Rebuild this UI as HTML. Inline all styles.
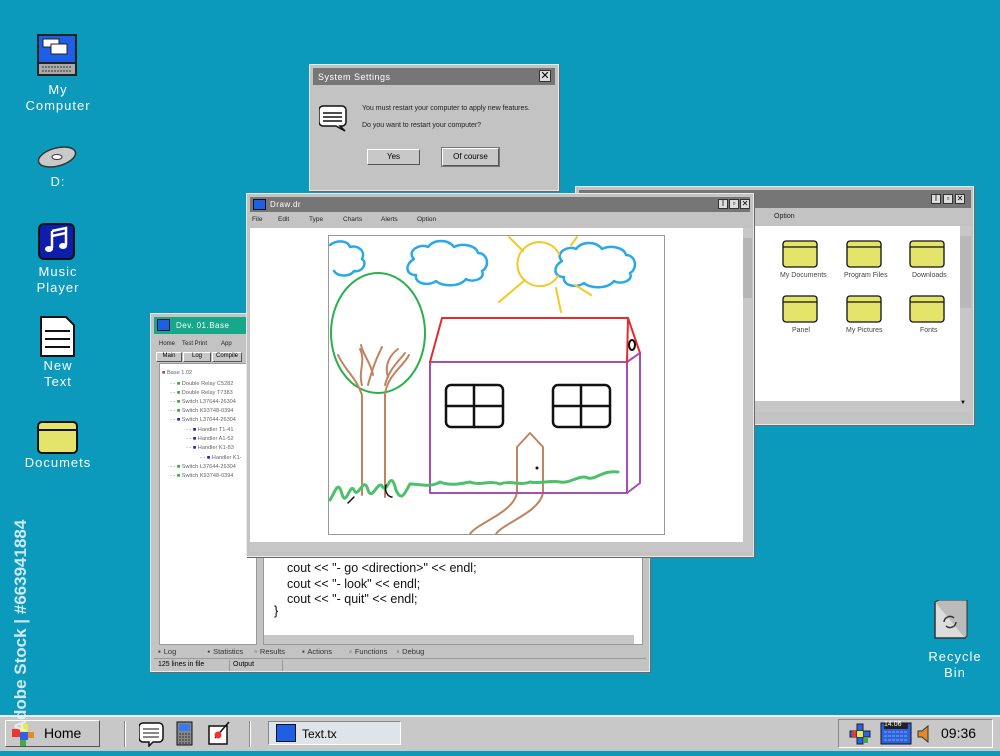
<!DOCTYPE html>
<html><head><meta charset="utf-8"><style>
*{margin:0;padding:0;box-sizing:border-box}
body{width:1000px;height:750px;overflow:hidden;background:#0b99bc;font-family:"Liberation Sans",sans-serif;position:relative}
.a{position:absolute}
.lbl{position:absolute;color:#fff;font-size:13px;letter-spacing:1px;text-align:center;width:100px;line-height:16px}
.win{position:absolute;background:#c3c3c3;border:1px solid #e8e8e8;box-shadow:1px 1px 0 #6a6a6a}
.tb{position:absolute;background:#767676;color:#fff;font-size:9px;letter-spacing:.5px}
.m{position:absolute;font-size:7px;color:#222}
.wb{position:absolute;width:10px;height:10px;background:#ddd;border:1px solid #333;font-size:8px;line-height:8px;text-align:center;color:#000}
.sm{font-size:7px;color:#444;position:absolute;white-space:nowrap}
.btn{position:absolute;background:#c8c8c8;border:1px solid #fff;border-right-color:#555;border-bottom-color:#555;font-size:8px;text-align:center}
</style></head><body>

<!-- desktop icons -->
<svg class="a" style="left:36px;top:34px" width="44" height="42"><rect x="2" y="1" width="38" height="28" fill="#1e5fe6" stroke="#222" stroke-width="2"/><rect x="7" y="5" width="16" height="8" fill="#fff" stroke="#222"/><rect x="15" y="10" width="16" height="10" fill="#fff" stroke="#222"/><rect x="2" y="29" width="38" height="12" fill="#aaa" stroke="#222" stroke-width="2"/><path d="M6 33h30M6 37h30" stroke="#333" stroke-dasharray="2 1"/></svg>
<div class="lbl" style="left:8px;top:82px">My</div>
<div class="lbl" style="left:8px;top:98px">Computer</div>
<svg class="a" style="left:37px;top:146px" width="42" height="24"><ellipse cx="20" cy="11" rx="19" ry="9" fill="#c9c9c9" stroke="#333" stroke-width="1.5" transform="rotate(-15 20 11)"/><ellipse cx="20" cy="11" rx="5" ry="2.5" fill="#fff" stroke="#333"/></svg>
<div class="lbl" style="left:8px;top:174px">D:</div>
<svg class="a" style="left:38px;top:223px" width="38" height="37"><rect x="1" y="1" width="35" height="35" rx="5" fill="#0e1eaa" stroke="#111" stroke-width="2"/><path d="M14 8v17M28 5v17M14 8l14-3v5l-14 3" stroke="#fff" stroke-width="2.5" fill="none"/><ellipse cx="11" cy="26" rx="4" ry="3" fill="#fff"/><ellipse cx="25" cy="23" rx="4" ry="3" fill="#fff"/></svg>
<div class="lbl" style="left:8px;top:264px">Music</div>
<div class="lbl" style="left:8px;top:280px">Player</div>
<svg class="a" style="left:40px;top:316px" width="36" height="42"><path d="M1 1h25l8 8v31H1z" fill="#fff" stroke="#111" stroke-width="2"/><path d="M5 15h25M5 23h25M5 31h25" stroke="#111" stroke-width="2"/></svg>
<div class="lbl" style="left:8px;top:358px">New</div>
<div class="lbl" style="left:8px;top:374px">Text</div>
<svg class="a" style="left:37px;top:421px" width="42" height="34"><rect x="1" y="1" width="39" height="31" rx="4" fill="#e5e46a" stroke="#111" stroke-width="2"/><path d="M1 9h39" stroke="#111" stroke-width="2"/></svg>
<div class="lbl" style="left:8px;top:455px">Documets</div>
<svg class="a" style="left:933px;top:600px" width="36" height="42"><rect x="2" y="2" width="30" height="36" fill="#ddd" stroke="#333" stroke-width="1.5"/><path d="M2 2l4-2h28v36l-2 2" fill="#bbb" stroke="#333"/><path d="M11 22a6 6 0 0 1 10-4M23 22a6 6 0 0 1-10 4" stroke="#333" fill="none" stroke-width="1.5"/></svg>
<div class="lbl" style="left:905px;top:649px">Recycle</div>
<div class="lbl" style="left:905px;top:665px">Bin</div>

<!-- System settings dialog -->
<div class="win" style="left:309px;top:64px;width:250px;height:127px">
<div class="tb" style="left:3px;top:3px;width:242px;height:17px;padding:4px 5px">System Settings</div>
<div class="wb" style="left:229px;top:5px;width:12px;height:12px;font-size:11px;line-height:10px">✕</div>
<svg class="a" style="left:9px;top:40px" width="30" height="28"><path d="M4 1h19a4 4 0 0 1 4 4v12a4 4 0 0 1-4 4h-2l5 5-9-5H4a4 4 0 0 1-4-4V5a4 4 0 0 1 4-4z" fill="#fff" stroke="#111" stroke-width="1.5"/><path d="M4 8h19M4 12h19M4 16h19" stroke="#111" stroke-width="1.5"/></svg>
<div class="m" style="left:52px;top:40px">You must restart your computer to apply new features.</div>
<div class="m" style="left:52px;top:57px">Do you want to restart your computer?</div>
<div class="btn" style="left:57px;top:84px;width:53px;height:16px;line-height:14px">Yes</div>
<div class="btn" style="left:132px;top:83px;width:57px;height:18px;line-height:16px;outline:1px solid #777">Of course</div>
</div>

<!-- Explorer window -->
<div class="win" style="left:575px;top:186px;width:399px;height:239px">
<div class="tb" style="left:3px;top:3px;width:392px;height:18px"></div>
<div class="wb" style="left:355px;top:7px">I</div><div class="wb" style="left:367px;top:7px">▫</div><div class="wb" style="left:379px;top:7px">✕</div>
<div class="m" style="left:198px;top:26px">Option</div>
<div class="a" style="left:3px;top:39px;width:381px;height:175px;background:#fff"></div>
<div class="a" style="left:384px;top:39px;width:11px;height:186px;background:#c7c7c7"><div class="a" style="top:10px;left:0;width:11px;height:72px;background:#b8b8b8"></div><div class="a" style="top:174px;left:0;font-size:6px">▼</div></div>
<div class="a" style="left:3px;top:214px;width:381px;height:11px;background:#c7c7c7"><div class="a" style="left:0;width:170px;height:11px;background:#b8b8b8"></div></div>
</div>
<svg class="a" style="left:575px;top:186px" width="399" height="160">
<g fill="#e5e46a" stroke="#111" stroke-width="1.3">
<rect x="208" y="55" width="34" height="26" rx="3"/><rect x="272" y="55" width="34" height="26" rx="3"/><rect x="335" y="55" width="34" height="26" rx="3"/>
<rect x="208" y="110" width="34" height="26" rx="3"/><rect x="272" y="110" width="34" height="26" rx="3"/><rect x="335" y="110" width="34" height="26" rx="3"/>
<path d="M208 61h34M272 61h34M335 61h34M208 116h34M272 116h34M335 116h34"/></g></svg>
<div class="sm" style="left:780px;top:272px">My Documents</div><div class="sm" style="left:844px;top:272px">Program Files</div><div class="sm" style="left:912px;top:272px">Downloads</div>
<div class="sm" style="left:792px;top:327px">Panel</div><div class="sm" style="left:846px;top:327px">My Pictures</div><div class="sm" style="left:920px;top:327px">Fonts</div>

<!-- Dev window -->
<div class="win" style="left:150px;top:313px;width:500px;height:359px">
<div class="a" style="left:3px;top:3px;width:95px;height:17px;background:#17a88c;color:#fff;font-size:8px;padding:4px 0 0 22px;letter-spacing:.5px">Dev. 01.Base</div>
<div class="a" style="left:6px;top:5px;width:13px;height:12px;background:#1e5fe6;border:1px solid #112"></div>
<div class="m" style="left:8px;top:27px;font-size:6px">Home</div><div class="m" style="left:31px;top:27px;font-size:6px">Test Print</div><div class="m" style="left:70px;top:27px;font-size:6px">App</div>
<div class="btn" style="left:5px;top:38px;width:26px;height:10px;font-size:6px">Main</div>
<div class="btn" style="left:32px;top:38px;width:28px;height:10px;font-size:6px">Log</div>
<div class="btn" style="left:61px;top:38px;width:30px;height:10px;font-size:6px">Compile</div>
<div class="a" style="left:8px;top:49px;width:98px;height:282px;background:#fff;border:1px solid #999"></div>
<div class="a" style="left:112px;top:243px;width:380px;height:88px;background:#fff;border:1px solid #999"></div>
<div class="a" style="left:113px;top:321px;width:370px;height:9px;background:#c7c7c7"></div>
<div class="a" style="left:3px;top:333px;width:492px;height:12px;border-bottom:1px solid #999"></div>
<div class="a" style="left:5px;top:346px;width:74px;height:11px;border-right:1px solid #999;font-size:7px;padding:1px 2px">125 lines in file</div>
<div class="a" style="left:80px;top:346px;width:52px;height:11px;border-right:1px solid #999;font-size:7px;padding:1px 2px">Output</div>
</div>
<div class="a" style="left:160px;top:369px;width:90px;height:120px;font-size:5.6px;color:#666;line-height:9px;white-space:nowrap">
<div style="margin-left:2px"><span style="color:#b44">■</span> Base 1.02</div>
<div style="margin-left:10px;margin-top:2px">- - <span style="color:#3a3">■</span> Double Relay C5282</div>
<div style="margin-left:10px">- - <span style="color:#3a3">■</span> Double Relay T7383</div>
<div style="margin-left:10px">- - <span style="color:#3a3">■</span> Switch L37644-26304</div>
<div style="margin-left:10px">- - <span style="color:#3a3">■</span> Switch K93748-0394</div>
<div style="margin-left:10px">- - <span style="color:#22b">■</span> Switch L37644-26304</div>
<div style="margin-left:26px;margin-top:1px">- - <span style="color:#22b">■</span> Handler T1-41</div>
<div style="margin-left:26px">- - <span style="color:#22b">■</span> Handler A1-52</div>
<div style="margin-left:26px">- - <span style="color:#22b">■</span> Handler K1-83</div>
<div style="margin-left:40px;margin-top:1px">- - <span style="color:#22b">■</span> Handler K1-</div>
<div style="margin-left:10px">- - <span style="color:#3a3">■</span> Switch L37644-26304</div>
<div style="margin-left:10px">- - <span style="color:#3a3">■</span> Switch K93748-0394</div>
</div>
<div class="a" style="left:158px;top:647px;font-size:7.5px;color:#333;white-space:nowrap;word-spacing:1px">▪ Log <span style="margin-left:28px">▪ Statistics</span> <span style="margin-left:8px">▫ Results</span> <span style="margin-left:14px">▪ Actions</span> <span style="margin-left:14px">▫ Functions</span> <span style="margin-left:6px">▫ Debug</span></div>
<div class="a" style="left:287px;top:561px;font-size:12.5px;line-height:15.5px;color:#111;white-space:pre">cout &lt;&lt; "- go &lt;direction&gt;" &lt;&lt; endl;
cout &lt;&lt; "- look" &lt;&lt; endl;
cout &lt;&lt; "- quit" &lt;&lt; endl;</div>
<div class="a" style="left:274px;top:604px;font-size:12.5px">}</div>

<!-- Draw window -->
<div class="win" style="left:246px;top:193px;width:508px;height:364px">
<div class="tb" style="left:3px;top:3px;width:500px;height:15px;padding:3px 0 0 20px;font-size:8px">Draw.dr</div>
<div class="a" style="left:6px;top:5px;width:13px;height:11px;background:#1e5fe6;border:1px solid #112"></div>
<div class="wb" style="left:471px;top:5px">I</div><div class="wb" style="left:482px;top:5px">▫</div><div class="wb" style="left:493px;top:5px">✕</div>
<div class="m" style="left:5px;top:22px;font-size:6.5px">File</div><div class="m" style="left:31px;top:22px;font-size:6.5px">Edit</div><div class="m" style="left:62px;top:22px;font-size:6.5px">Type</div><div class="m" style="left:96px;top:22px;font-size:6.5px">Charts</div><div class="m" style="left:134px;top:22px;font-size:6.5px">Alerts</div><div class="m" style="left:170px;top:22px;font-size:6.5px">Option</div>
<div class="a" style="left:3px;top:34px;width:493px;height:314px;background:#fff"></div>
<div class="a" style="left:496px;top:34px;width:9px;height:314px;background:#c7c7c7"><div class="a" style="top:10px;width:9px;height:60px;background:#b5b5b5"></div></div>
<div class="a" style="left:3px;top:348px;width:502px;height:10px;background:#c7c7c7"></div>
</div>
<svg class="a" style="left:328px;top:235px" width="337" height="300">
<rect x="0.5" y="0.5" width="336" height="299" fill="#fff" stroke="#999"/>
<g fill="none" stroke-linecap="round" stroke-linejoin="round">
<g stroke="#2aa9e8" stroke-width="2.5">
<path d="M2 10c8-6 18-4 20 2 8-2 16 4 12 12 6 4 0 14-8 12-4 6-16 6-20 0"/>
<path d="M86 24c-8-8 6-16 14-12 6-8 20-8 26 0 8-4 22-2 24 6 10 0 12 14 4 18 4 8-10 12-16 8-6 8-24 8-30 2-8 6-22 2-20-6-10 0-12-10-2-16z"/>
<path d="M234 26c-8-8 6-16 14-12 6-8 20-8 26 0 8-4 22-2 24 6 10 0 12 14 4 18 4 8-10 12-16 8-6 8-24 8-30 2-8 6-22 2-20-6-10 0-12-10-2-16z"/>
</g>
<g stroke="#f5c825" stroke-width="2">
<path d="M230 41a22 22 0 1 1 1-22"/>
<path d="M181 2l14 14M249 2l-6 8M247 50l16 10M197 45l-26 22M228 53l5 24"/>
</g>
<ellipse cx="50" cy="98" rx="47" ry="60" stroke="#28b04a" stroke-width="2"/>
<g stroke="#c08560" stroke-width="2">
<path d="M34 260V160M57 262V160M34 160c-6-18-18-26-24-40M34 150c-4-14 4-24-2-36M40 150c4-16 8-26 14-38M57 160c2-20 18-28 24-40M57 150c4-16 14-24 20-32M45 140c-2-12-10-20-12-30M60 142c-4-12 2-22 10-28"/>
<path d="M189 258V212l13-14 13 14v46M189 258c-4 20-40 30-47 41M215 258c-4 20-40 30-47 41"/>
</g>
<g stroke="#a54fb5" stroke-width="2"><path d="M102 127h197l13-9M102 127v131h197V127M312 118v130l-13 10"/></g>
<g stroke="#e82a2a" stroke-width="2"><path d="M102 127l12-44h186l12 35M300 83l-1 44"/></g>
<ellipse cx="304" cy="110" rx="3" ry="5" stroke="#111" stroke-width="2"/>
<g stroke="#111" stroke-width="2.5"><rect x="118" y="150" width="57" height="42" rx="5"/><path d="M146 150v42M118 171h57"/><rect x="225" y="150" width="57" height="42" rx="5"/><path d="M253 150v42M225 171h57"/></g>
<circle cx="209" cy="233" r="1.5" fill="#111"/>
<path d="M2 265c6-10 8-20 12-6 4 14 8-12 12-4 4 10 10-16 14 0 4 12 10-10 14-4 6 10 8-20 14 4 6 14 10 0 14-6 10 0 20 4 30-2 10 4 20 2 30 0 10 4 20-2 30 2 10-4 20 2 30-2 10 2 20-2 30 0 10 2 20-8 28-4 8 2 14-8 30-6" stroke="#4cc06a" stroke-width="3"/>
<path d="M26 262l-6 6M58 250c-2 6 2 12 6 12" stroke="#111" stroke-width="1.5"/>
</g></svg>

<!-- taskbar -->
<div class="a" style="left:0;top:715px;width:1000px;height:36px;background:#c8c8c8;border-top:2px solid #eee"></div>
<div class="btn" style="left:5px;top:720px;width:95px;height:27px;font-size:14px;line-height:25px;text-align:left;padding-left:38px">Home</div>
<svg class="a" style="left:12px;top:724px" width="22" height="22"><rect x="0" y="5" width="8" height="8" fill="#e33"/><rect x="8" y="0" width="8" height="8" fill="#e9e94a"/><rect x="8" y="8" width="8" height="8" fill="#2b62e8"/><rect x="8" y="16" width="6" height="6" fill="#4a4"/><rect x="16" y="8" width="6" height="6" fill="#e38a2a"/></svg>
<div class="a" style="left:124px;top:721px;width:2px;height:26px;border-left:1px solid #888;border-right:1px solid #fff"></div>
<svg class="a" style="left:139px;top:721px" width="26" height="26"><path d="M4 2h16a4 4 0 0 1 4 4v11a4 4 0 0 1-4 4h-6l-4 4v-4H4a4 4 0 0 1-4-4V6a4 4 0 0 1 4-4z" fill="#fff" stroke="#111" stroke-width="1.5"/><path d="M4 8h16M4 12h16M4 16h16" stroke="#111"/></svg>
<svg class="a" style="left:176px;top:721px" width="18" height="25"><rect x="1" y="1" width="15" height="23" fill="#888" stroke="#111"/><rect x="3" y="3" width="11" height="7" fill="#3a7af0"/><path d="M3 13h11M3 16h11M3 19h11M3 22h11" stroke="#333" stroke-dasharray="2 1"/></svg>
<svg class="a" style="left:207px;top:720px" width="26" height="26"><rect x="2" y="6" width="18" height="18" fill="#fff" stroke="#111" stroke-width="1.5"/><path d="M8 18l14-16" stroke="#111" stroke-width="1.5"/><circle cx="11" cy="15" r="3.5" fill="#e33"/></svg>
<div class="a" style="left:249px;top:721px;width:2px;height:26px;border-left:1px solid #888;border-right:1px solid #fff"></div>
<div class="a" style="left:268px;top:721px;width:133px;height:24px;background:#dfe4e8;border:1px solid #888;border-right-color:#fff;border-bottom-color:#fff;font-size:12px;padding:5px 0 0 33px">Text.tx</div>
<div class="a" style="left:276px;top:724px;width:20px;height:18px;background:#1e5fe6;border:1px solid #112"></div>
<div class="a" style="left:838px;top:719px;width:155px;height:29px;border:1px solid #888;border-right-color:#fff;border-bottom-color:#fff"></div>
<svg class="a" style="left:849px;top:723px" width="22" height="22"><path d="M8 1h6v20H8zM1 8h20v6H1z" fill="#2b62e8" stroke="#222"/><rect x="8" y="8" width="6" height="6" fill="#e9e94a"/><rect x="3" y="8" width="4" height="6" fill="#e33"/><rect x="15" y="14" width="4" height="6" fill="#4a4"/></svg>
<svg class="a" style="left:880px;top:722px" width="32" height="23"><rect x="1" y="1" width="30" height="21" fill="#2b62e8" stroke="#111"/><rect x="4" y="1" width="24" height="6" fill="#222"/><path d="M4 10h24M4 14h24M4 18h24" stroke="#8ab" stroke-dasharray="3 1"/></svg>
<div class="a" style="left:884px;top:721px;font-size:7px;color:#fff">14.06</div>
<svg class="a" style="left:917px;top:725px" width="14" height="18"><path d="M1 6h4l6-5v16l-6-5H1z" fill="#e38a2a" stroke="#333"/></svg>
<div class="a" style="left:941px;top:725px;font-size:14px">09:36</div>
<div class="a" style="left:-109px;top:616px;width:260px;transform:rotate(-90deg);color:#e6f2f6;font-size:17px;font-weight:bold;text-align:center;white-space:nowrap;opacity:.9">Adobe Stock | #663941884</div>
</body></html>
